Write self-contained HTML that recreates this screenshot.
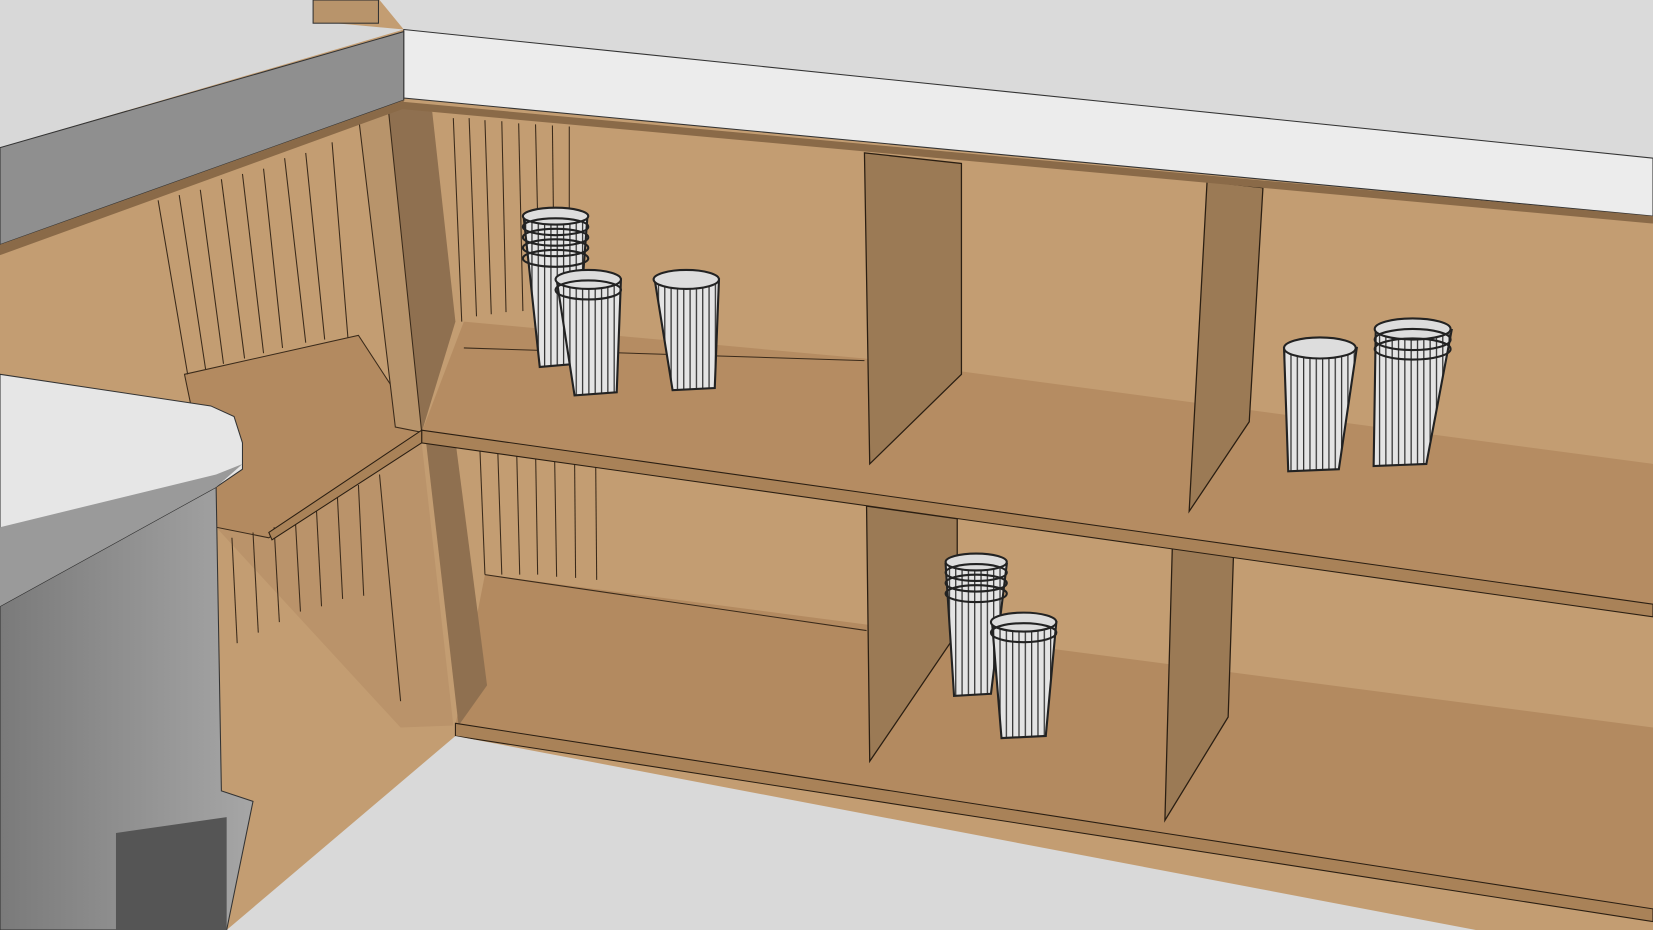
<!DOCTYPE html>
<html><head><meta charset="utf-8"><style>html,body{margin:0;padding:0;background:#c09a70;overflow:hidden}svg{display:block}</style></head><body>
<svg width="1653" height="930" viewBox="0 0 1568 882" preserveAspectRatio="none" xmlns="http://www.w3.org/2000/svg">
<defs>
<pattern id="st" width="6" height="10" patternUnits="userSpaceOnUse"><rect width="6" height="10" fill="#e4e4e4"/><rect width="1.2" height="10" fill="#333"/></pattern>
<linearGradient id="sk" x1="0" y1="0" x2="1" y2="0"><stop offset="0" stop-color="#7a7a7a"/><stop offset="1" stop-color="#a6a6a6"/></linearGradient>
</defs>
<rect width="1568" height="882" fill="#c39d72"/>
<!-- upper shelf surface -->
<polygon points="400,410 440,305 820,340 1568,440 1568,575" fill="#b58c62"/>
<!-- lower cabinet floor -->
<polygon points="432,688 460,545 1568,690 1568,870" fill="#b38a60"/>
<polygon points="205,500 255,505 400,420 430,688 380,690" fill="#ba936a"/>
<!-- left side shelf -->
<polygon points="175,355 340,318 400,410 255,510 205,500" fill="#b38a60" stroke="#3a2a1a" stroke-width="1"/>
<!-- slats -->
<g stroke="#3a2a1a" stroke-width="1">
<line x1="150" y1="190" x2="178" y2="355"/><line x1="170" y1="185" x2="195" y2="350"/><line x1="190" y1="180" x2="212" y2="345"/><line x1="210" y1="170" x2="232" y2="340"/><line x1="230" y1="165" x2="250" y2="335"/><line x1="250" y1="160" x2="268" y2="330"/><line x1="270" y1="150" x2="290" y2="325"/><line x1="290" y1="145" x2="308" y2="322"/><line x1="315" y1="135" x2="330" y2="320"/>
<line x1="430" y1="112" x2="438" y2="305"/><line x1="445" y1="112" x2="452" y2="300"/><line x1="460" y1="114" x2="466" y2="298"/><line x1="476" y1="115" x2="480" y2="296"/><line x1="492" y1="117" x2="496" y2="295"/><line x1="508" y1="118" x2="512" y2="295"/><line x1="524" y1="119" x2="526" y2="295"/><line x1="540" y1="120" x2="540" y2="297"/>
<line x1="455" y1="420" x2="460" y2="545"/><line x1="472" y1="422" x2="476" y2="545"/><line x1="490" y1="424" x2="493" y2="545"/><line x1="508" y1="426" x2="510" y2="545"/><line x1="526" y1="428" x2="528" y2="547"/><line x1="545" y1="430" x2="546" y2="548"/><line x1="565" y1="432" x2="566" y2="550"/>
<line x1="220" y1="510" x2="225" y2="610"/><line x1="240" y1="505" x2="245" y2="600"/><line x1="260" y1="500" x2="265" y2="590"/><line x1="280" y1="490" x2="285" y2="580"/><line x1="300" y1="480" x2="305" y2="575"/><line x1="320" y1="470" x2="325" y2="568"/><line x1="340" y1="460" x2="345" y2="565"/><line x1="360" y1="450" x2="380" y2="665"/>
<line x1="440" y1="330" x2="820" y2="342"/><line x1="460" y1="545" x2="822" y2="598"/>
</g>
<!-- vertical post -->
<polygon points="368,100 410,106 432,305 400,410" fill="#8f7050"/>
<polygon points="404,418 432,418 462,650 435,688" fill="#8f7050"/>
<polygon points="340,110 368,100 400,410 375,405" fill="#b8946b" stroke="#3a2a1a" stroke-width="1"/>
<!-- dividers -->
<polygon points="820,145 912,155 912,355 825,440" fill="#9b7a55" stroke="#2a1e12" stroke-width="1.2"/>
<polygon points="1145,172 1198,178 1185,400 1128,485" fill="#9b7a55" stroke="#2a1e12" stroke-width="1.2"/>
<polygon points="822,480 908,492 908,600 825,722" fill="#9b7a55" stroke="#2a1e12" stroke-width="1.2"/>
<polygon points="1112,520 1170,528 1165,680 1105,778" fill="#9b7a55" stroke="#2a1e12" stroke-width="1.2"/>
<!-- upper shelf front edge -->
<polygon points="400,408 1568,573 1568,585 400,420" fill="#a98258" stroke="#2a1e12" stroke-width="1"/>
<polygon points="255,505 400,408 400,420 258,512" fill="#a98258" stroke="#2a1e12" stroke-width="1"/>
<!-- plinth -->
<polygon points="432,686 1568,862 1568,874 432,698" fill="#a98258" stroke="#2a1e12" stroke-width="1"/>
<!-- floor -->
<polygon points="215,882 432,698 1400,882" fill="#d9d9d9"/>
<!-- right counter -->
<polygon points="360,0 1568,0 1568,150 383,28" fill="#dadada"/>
<polygon points="383,28 1568,150 1568,205 383,93" fill="#ececec" stroke="#333" stroke-width="1"/>
<polygon points="365,95 1568,205 1568,212 365,102" fill="#8a6a48"/>
<!-- left counter -->
<polygon points="0,0 297,0 297,20 383,28 0,140" fill="#d8d8d8"/>
<rect x="297" y="0" width="62" height="22" fill="#b8946b" stroke="#333" stroke-width="1"/>
<polygon points="0,140 383,30 383,95 0,232" fill="#8f8f8f" stroke="#333" stroke-width="1"/>
<polygon points="0,232 383,95 383,103 0,242" fill="#8a6a48"/>
<!-- sink -->
<polygon points="0,575 205,462 210,750 240,760 215,882 0,882" fill="url(#sk)" stroke="#333" stroke-width="1"/>
<polygon points="110,790 215,775 215,882 110,882" fill="#555"/>
<polygon points="0,355 200,385 222,395 230,420 230,445 205,462 0,575" fill="#e6e6e6" stroke="#333" stroke-width="1"/>
<polygon points="0,500 205,450 230,440 205,462 0,575" fill="#9a9a9a"/>
<!-- cups -->
<g stroke="#222" stroke-width="2">
<path d="M497,208 L557,208 L547,345 L512,348 Z" fill="url(#st)"/>
<ellipse cx="527" cy="205" rx="31" ry="8" fill="#ddd"/><ellipse cx="527" cy="215" rx="31" ry="8" fill="none"/><ellipse cx="527" cy="225" rx="31" ry="8" fill="none"/><ellipse cx="527" cy="235" rx="31" ry="8" fill="none"/><ellipse cx="527" cy="245" rx="31" ry="8" fill="none"/>
<path d="M528,265 L589,265 L585,372 L545,375 Z" fill="url(#st)"/><ellipse cx="558" cy="265" rx="31" ry="9" fill="#ddd"/><ellipse cx="558" cy="275" rx="31" ry="9" fill="none"/>
<path d="M621,265 L682,265 L678,368 L638,370 Z" fill="url(#st)"/><ellipse cx="651" cy="265" rx="31" ry="9" fill="#ddd"/>
<path d="M1218,330 L1287,330 L1270,445 L1222,447 Z" fill="url(#st)"/><ellipse cx="1252" cy="330" rx="34" ry="10" fill="#ddd"/>
<path d="M1305,313 L1377,313 L1353,440 L1303,442 Z" fill="url(#st)"/><ellipse cx="1340" cy="312" rx="36" ry="10" fill="#ddd"/><ellipse cx="1340" cy="322" rx="36" ry="10" fill="none"/><ellipse cx="1340" cy="331" rx="36" ry="10" fill="none"/>
<path d="M897,535 L955,535 L940,658 L905,660 Z" fill="url(#st)"/><ellipse cx="926" cy="533" rx="29" ry="8" fill="#ddd"/><ellipse cx="926" cy="543" rx="29" ry="8" fill="none"/><ellipse cx="926" cy="553" rx="29" ry="8" fill="none"/><ellipse cx="926" cy="563" rx="29" ry="8" fill="none"/>
<path d="M941,590 L1002,590 L992,698 L950,700 Z" fill="url(#st)"/><ellipse cx="971" cy="590" rx="31" ry="9" fill="#ddd"/><ellipse cx="971" cy="600" rx="31" ry="9" fill="none"/>
</g>
</svg>
</body></html>
